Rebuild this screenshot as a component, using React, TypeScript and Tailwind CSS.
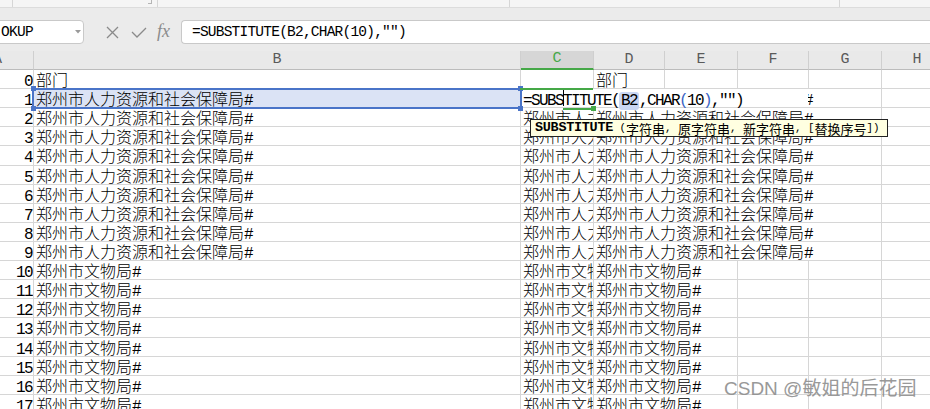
import React from "react";

const CJK = "font-['Noto_Sans_CJK_SC',sans-serif] text-[16px] font-light";
const MONO = "font-['Liberation_Mono',monospace] text-[16px] tracking-[-1.6px]";

const HR = "郑州市人力资源和社会保障局#";
const WW = "郑州市文物局#";

// column widths A..H
const COLS = [34, 487, 73, 71, 73, 71, 73, 71];
const LETTERS = ["A", "B", "C", "D", "E", "F", "G", "H"];

function Mixed({ t, cjk, ascii }: { t: string; cjk: string; ascii: string }) {
  const parts = t.split(/([\x20-\x7e]+)/).filter((p) => p.length > 0);
  return (
    <>
      {parts.map((p, i) =>
        /^[\x20-\x7e]+$/.test(p) ? (
          <span key={i} className={ascii}>
            {p}
          </span>
        ) : (
          <span key={i} className={cjk}>
            {p}
          </span>
        )
      )}
    </>
  );
}

type RowData = { n: string; b: string; c: string; d: string; dSpan: number; active?: boolean };

const rows: RowData[] = [
  { n: "0", b: "部门", c: "", d: "部门", dSpan: 1 },
  { n: "1", b: HR, c: "", d: HR, dSpan: 4, active: true },
  ...[2, 3, 4, 5, 6, 7, 8, 9].map((n) => ({ n: String(n), b: HR, c: HR, d: HR, dSpan: 4 })),
  ...[10, 11, 12, 13, 14, 15, 16, 17].map((n) => ({ n: String(n), b: WW, c: WW, d: WW, dSpan: 2 })),
];

const cellBase =
  "shrink-0 h-full border-r border-b border-[#d6d6d6] overflow-hidden whitespace-nowrap leading-[18px]";

function Row({ r }: { r: RowData }) {
  const dWidth = COLS.slice(3, 3 + r.dSpan).reduce((a, b) => a + b, 0);
  const rest = COLS.slice(3 + r.dSpan);
  return (
    <div className="relative flex h-[19.12px]">
      <div className={`${cellBase} w-[34px] text-right pr-[1px]`}>
        <span className={MONO}>{r.n}</span>
      </div>
      <div className={`${cellBase} w-[487px] pl-[2px] ${r.active ? "bg-[#dbe3f5]" : ""}`}>
        <Mixed t={r.b} cjk={CJK} ascii={MONO} />
      </div>
      <div className={`${cellBase} w-[73px] pl-[2px]`}>
        <Mixed t={r.c} cjk={CJK} ascii={MONO} />
      </div>
      <div className={`${cellBase} pl-[2px]`} style={{ width: dWidth }}>
        <Mixed t={r.d} cjk={CJK} ascii={MONO} />
      </div>
      {rest.map((w, i) => (
        <div key={i} className={cellBase} style={{ width: w }} />
      ))}

      {r.active && (
        <>
          {/* reference highlight on B2 */}
          <div className="absolute left-[32px] top-[-1px] w-[490px] h-[21px] border-2 border-[#4a74c8] z-20" />
          <div className="absolute left-[31px] top-[-3px] w-[5px] h-[5px] bg-[#4a74c8] z-20" />
          <div className="absolute left-[31px] top-[17px] w-[5px] h-[5px] bg-[#4a74c8] z-20" />
          <div className="absolute left-[518px] top-[-3px] w-[5px] h-[5px] bg-[#4a74c8] z-20" />
          <div className="absolute left-[518px] top-[17px] w-[5px] h-[5px] bg-[#4a74c8] z-20" />
          {/* in-cell editor */}
          <div className="absolute left-[522px] top-0 w-[286px] h-[18px] bg-white z-10 whitespace-nowrap leading-[18px] pl-[1px]">
            <span className={MONO}>=SUBSTITUTE(</span>
            <span className={`${MONO} bg-[#c9d6f3] rounded-[3px] px-[2px]`}>B2</span>
            <span className={MONO}>,CHAR</span>
            <span className={`${MONO} text-[#3b64c4]`}>(</span>
            <span className={MONO}>10</span>
            <span className={`${MONO} text-[#3b64c4]`}>)</span>
            <span className={MONO}>,"")</span>
          </div>
          <div className="absolute left-[520px] top-[-1px] w-[73px] h-[2px] bg-[#45a847] z-20" />
          <div className="absolute left-[563px] top-[19px] w-[30px] h-[2px] bg-[#45a847] z-20" />
          <div className="absolute left-[591px] top-[17px] w-[5px] h-[5px] bg-[#45a847] z-20" />
          <div className="absolute left-[563px] top-[1px] w-[1px] h-[16px] bg-black z-20" />
        </>
      )}
    </div>
  );
}

export default function App() {
  return (
    <div className="relative w-[930px] h-[409px] overflow-hidden bg-white text-black font-['Noto_Sans_CJK_SC',sans-serif]">
      {/* top ribbon strip */}
      <div className="flex h-[8px] bg-[#f5f5f5] border-b border-[#dcdcdc]">
        <div className="w-[13px] border-r border-[#d6d6d6]" />
        <div className="w-[145px] border-r border-[#d6d6d6] flex justify-end items-start">
          <div className="w-[4px] h-[4px] border-r border-b border-[#b5b5b5] mr-[5px]" />
        </div>
        <div className="w-[352px] border-r border-[#d6d6d6]" />
        <div className="w-[330px] border-r border-[#d6d6d6]" />
      </div>

      {/* formula bar */}
      <div className="flex items-start h-[43px] bg-[#ebebeb] pt-[12px]">
        <div className="flex items-center justify-between w-[95px] -ml-[11px] h-[24px] bg-white border border-[#c9c9c9] rounded-[4px] pl-[11px] pr-[2px] shrink-0">
          <span className="font-['Liberation_Mono',monospace] text-[14.5px] tracking-[-0.7px] leading-none">OKUP</span>
          <svg width="6" height="4" viewBox="0 0 6 4">
            <path d="M0 0 L6 0 L3 3.5 Z" fill="#9a9a9a" />
          </svg>
        </div>
        <div className="flex items-center h-[24px] shrink-0">
          <svg className="ml-[22px]" width="13" height="13" viewBox="0 0 13 13">
            <path d="M1 1 L12 12 M12 1 L1 12" stroke="#8a8a8a" strokeWidth="1.3" fill="none" />
          </svg>
          <svg className="ml-[12px]" width="16" height="11" viewBox="0 0 16 11">
            <path d="M1 5 L6 10 L15 1" stroke="#8a8a8a" strokeWidth="1.3" fill="none" />
          </svg>
          <div className="ml-[10px] w-[16px] font-['Liberation_Serif',serif] italic text-[18px] leading-none text-[#8c8c8c] pb-[2px]">
            fx
          </div>
        </div>
        <div className="ml-[8px] flex-1 h-[24px] bg-white border border-r-0 border-[#c9c9c9] rounded-l-[4px] pl-[10px] flex items-center">
          <span className="font-['Liberation_Mono',monospace] text-[14.5px] tracking-[-0.78px] leading-none whitespace-pre">
            =SUBSTITUTE(B2,CHAR(10),"")
          </span>
        </div>
      </div>

      {/* column headers */}
      <div className="flex h-[19px] bg-[#e9e9e9]">
        {COLS.map((w, i) => (
          <div
            key={i}
            style={{ width: w }}
            className={`shrink-0 h-full border-r border-[#cfcfcf] flex items-center overflow-hidden font-['Liberation_Mono',monospace] text-[15px] ${
              i === 2
                ? "bg-[#d6d6d6] border-b-2 border-b-[#45a847] text-[#45a847] justify-center"
                : i === 0
                ? "border-b border-b-[#bcbcbc] text-[#5a5a5a] justify-start"
                : "border-b border-b-[#bcbcbc] text-[#5a5a5a] justify-center"
            }`}
          >
            <span className={i === 0 ? "-ml-[7px]" : ""}>{LETTERS[i]}</span>
          </div>
        ))}
      </div>

      {/* grid */}
      <div className="relative">
        {rows.map((r) => (
          <Row key={r.n} r={r} />
        ))}

        {/* function tooltip */}
        <div className="absolute left-[530px] top-[49px] w-[358px] h-[18px] bg-[#ffffe1] border border-[#222] z-30 flex items-center pl-[4px] whitespace-pre leading-none">
          <span className="font-['Liberation_Mono',monospace] font-bold text-[13.5px] tracking-[-0.3px]">SUBSTITUTE</span>
          <Mixed
            t=" (字符串, 原字符串, 新字符串, [替换序号])"
            cjk="font-['Noto_Sans_CJK_SC',sans-serif] text-[13px]"
            ascii="font-['Liberation_Mono',monospace] text-[10.8px]"
          />
        </div>
      </div>

      {/* watermark */}
      <div className="absolute left-[724px] top-[375px] z-40 whitespace-nowrap text-[19px] leading-[24px] text-[#8e8e8e] opacity-90">
        <span className="font-['Liberation_Sans',sans-serif]">CSDN @</span>
        <span className="font-['Noto_Sans_CJK_SC',sans-serif]">敏姐的后花园</span>
      </div>
    </div>
  );
}
